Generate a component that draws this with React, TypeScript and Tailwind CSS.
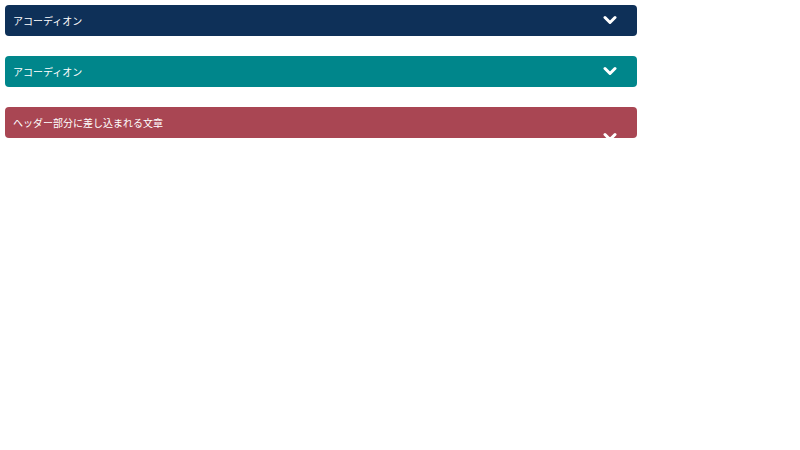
import React from "react";

function Chevron() {
  return (
    <svg viewBox="0 0 14 10" className="h-[10px] w-[14px]">
      <polyline
        points="2,2.5 7,7.5 12,2.5"
        fill="none"
        stroke="white"
        strokeWidth="3"
        strokeLinecap="round"
        strokeLinejoin="round"
      />
    </svg>
  );
}

const ITEMS = [
  { title: "アコーディオン", color: "bg-[#0e3058]", drop: false },
  { title: "アコーディオン", color: "bg-[#00868b]", drop: false },
  { title: "ヘッダー部分に差し込まれる文章", color: "bg-[#a94653]", drop: true },
];

export default function App() {
  return (
    <div
      className="flex w-[800px] flex-col gap-5 bg-white p-[5px] pr-[163px]"
      style={{ fontFamily: '"Noto Sans CJK JP", "Noto Sans", sans-serif' }}
    >
      {ITEMS.map((item, i) => (
        <div
          key={i}
          className={`relative h-[31px] overflow-hidden rounded-[4px] ${item.color} text-[10px] text-white`}
        >
          <div className="flex h-full items-center pl-2">{item.title}</div>
          <div
            className={`absolute right-[20px] ${item.drop ? "top-[25px]" : "top-[10px]"}`}
          >
            <Chevron />
          </div>
        </div>
      ))}
    </div>
  );
}
